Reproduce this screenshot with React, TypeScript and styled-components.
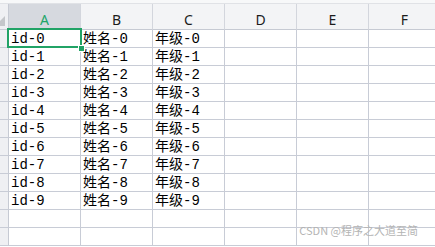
import React from 'react';
import styled, { createGlobalStyle, css } from 'styled-components';

const GlobalStyle = createGlobalStyle`
  html, body {
    margin: 0;
    padding: 0;
    background: #ffffff;
    overflow: hidden;
  }
`;

const columns = ['A', 'B', 'C', 'D', 'E', 'F'];
const rows = Array.from({ length: 12 }, (_, i) =>
  i < 10 ? [`id-${i}`, `姓名-${i}`, `年级-${i}`, '', '', ''] : ['', '', '', '', '', '']
);

const App = () => {
  return (
    <>
      <GlobalStyle />
      <Sheet>
        <TopStrip />
        <Grid>
          <Corner>
            <SelectAll />
          </Corner>
          {columns.map((c, i) => (
            <ColHeader key={c} $active={i === 0}>
              {c}
            </ColHeader>
          ))}
          {rows.map((row, r) => (
            <React.Fragment key={r}>
              <RowHeader />
              {row.map((v, c) => (
                <Cell key={c} $selected={r === 0 && c === 0}>
                  {v}
                </Cell>
              ))}
            </React.Fragment>
          ))}
        </Grid>
        <Watermark>CSDN @程序之大道至简</Watermark>
      </Sheet>
    </>
  );
};

export default App;

const Sheet = styled.div`
  position: relative;
  width: 435px;
  height: 247px;
  overflow: hidden;
  background: #ffffff;
`;

const TopStrip = styled.div`
  height: 3px;
  background: #f7f8f9;
  border-bottom: 1px solid #e0e2e6;
`;

const Grid = styled.div`
  display: grid;
  grid-template-columns: 9px repeat(6, 72px);
  grid-template-rows: 26px repeat(12, 18px);
  width: max-content;
`;

const Corner = styled.div`
  position: relative;
  overflow: hidden;
  box-sizing: border-box;
  background: #eff0f3;
  border-right: 1px solid #c6cad3;
  border-bottom: 1px solid #c6cad3;
`;

const SelectAll = styled.div`
  position: absolute;
  left: -5px;
  bottom: 3px;
  width: 0;
  height: 0;
  border-left: 10px solid transparent;
  border-bottom: 10px solid #c4c6ca;
`;

const ColHeader = styled.div<{ $active?: boolean }>`
  box-sizing: border-box;
  display: flex;
  align-items: center;
  justify-content: center;
  padding-top: 7px;
  background: ${(p) => (p.$active ? '#d6d9df' : '#f3f4f6')};
  color: ${(p) => (p.$active ? '#22a56a' : '#1c1c1c')};
  border-right: 1px solid #d3d6dd;
  border-bottom: 1px solid #c6cad3;
  font-family: 'Noto Sans', 'Liberation Sans', sans-serif;
  font-size: 14px;
  line-height: 16px;
`;

const RowHeader = styled.div`
  box-sizing: border-box;
  background: #eff0f3;
  border-right: 1px solid #c6cad3;
  border-bottom: 1px solid #c8ccd6;
`;

const selectedCell = css`
  position: relative;

  &::before {
    content: '';
    position: absolute;
    inset: -2px -2px -1px -2px;
    border: 2px solid #21a366;
    pointer-events: none;
  }

  &::after {
    content: '';
    position: absolute;
    right: -5px;
    bottom: -5px;
    width: 5px;
    height: 5px;
    background: #21a366;
    border: 1px solid #ffffff;
  }
`;

const Cell = styled.div<{ $selected?: boolean }>`
  box-sizing: border-box;
  padding: 1px 0 0 2px;
  border-right: 1px solid #c8ccd6;
  border-bottom: 1px solid #c8ccd6;
  font-family: 'Liberation Mono', 'Noto Sans CJK SC', monospace;
  font-size: 14px;
  line-height: 16px;
  color: #000000;
  white-space: nowrap;
  ${(p) => p.$selected && selectedCell}
`;

const Watermark = styled.div`
  position: absolute;
  right: 17px;
  bottom: 10px;
  font-family: 'Noto Sans CJK SC', 'Noto Sans', sans-serif;
  font-size: 11px;
  line-height: 14px;
  color: #b4b4b4;
  white-space: nowrap;
`;
